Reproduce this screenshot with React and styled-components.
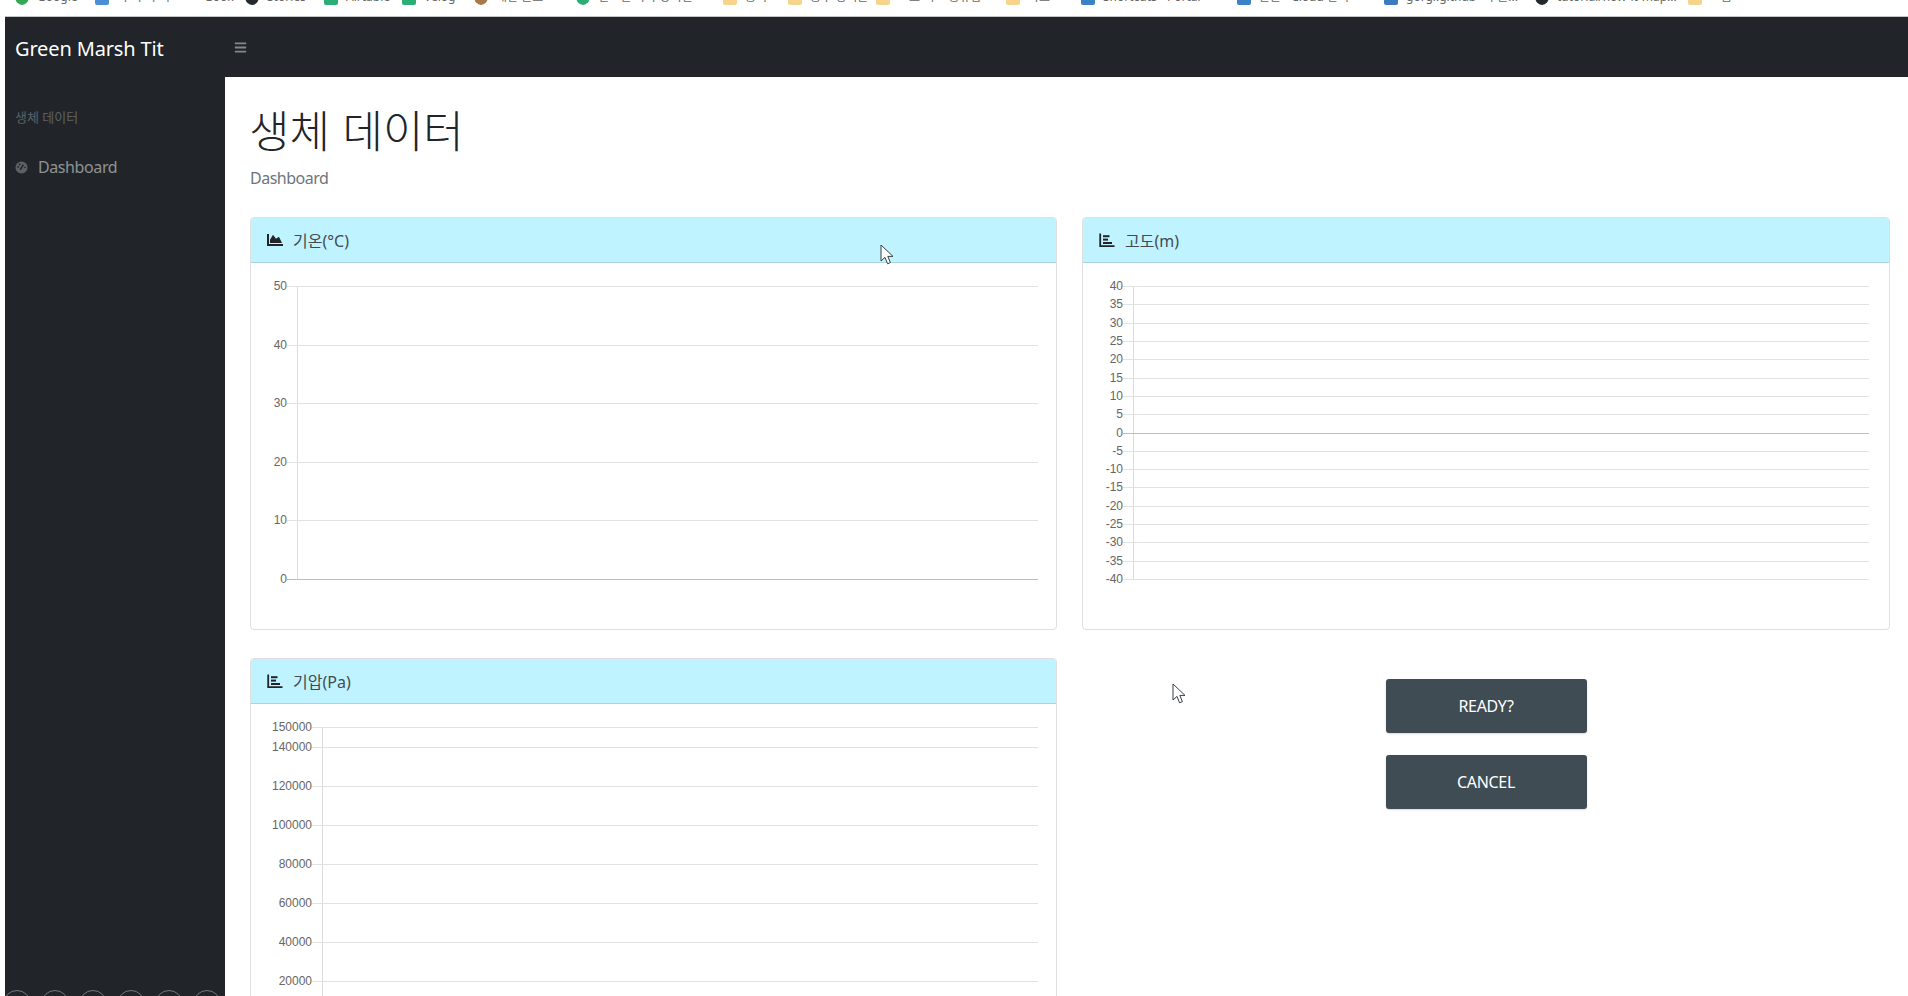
import React from "react";
import styled, { createGlobalStyle } from "styled-components";
import { FaBars, FaChartArea } from "react-icons/fa";

const bookmarks = [
  { width: 80, color: "#34a853", round: true, label: "Google" },
  { width: 87, color: "#4a8fd6", label: "가 나 다 라" },
  { width: 63, color: "transparent", label: "Gook" },
  { width: 79, color: "#24292e", round: true, label: "Stories" },
  { width: 78, color: "#2bae76", label: "Airtable" },
  { width: 72, color: "#2bae76", label: "Velog" },
  { width: 102, color: "#a9794b", round: true, label: "개발 블로그" },
  { width: 147, color: "#2bae76", round: true, label: "인프런 자바 강의실" },
  { width: 65, color: "#f7d48c", label: "공지" },
  { width: 88, color: "#f7d48c", label: "공부 정리글" },
  { width: 130, color: "#f7d48c", label: "프로 젝트 공유함" },
  { width: 75, color: "#f7d48c", label: "자료" },
  { width: 156, color: "#3b82c4", label: "Shortcuts - Portal" },
  { width: 147, color: "#3b82c4", label: "논문 - Cloud 관리" },
  { width: 151, color: "#3b7bbf", label: "gorgi.github - 구글..." },
  { width: 153, color: "#24292e", round: true, label: "tutorial/how-it-map..." },
  { width: 60, color: "#f7d48c", label: "모음" },
];

const linear = (from, to, count) =>
  Array.from({ length: count + 1 }, (_, i) => from + ((to - from) * i) / count);

const tempTicks = linear(23, 316, 5).map((y, i) => ({
  y,
  label: String(50 - i * 10),
  strong: i === 5,
}));

const altTicks = linear(23, 316, 16).map((y, i) => ({
  y,
  label: String(40 - i * 5),
  strong: 40 - i * 5 === 0,
}));

const pressureTicks = [
  { y: 23, label: "150000" },
  ...linear(42.7, 315.7, 7).map((y, i) => ({
    y,
    label: String(140000 - i * 20000),
    strong: i === 7,
  })),
];

const Chart = ({ ticks, axisX, rightX }) => (
  <ChartSvg viewBox="0 0 806 366">
    <line x1={axisX + 0.5} x2={axisX + 0.5} y1={23} y2={316} stroke="#dcdcdc" />
    {ticks.map((t) => (
      <g key={t.label}>
        <line
          x1={axisX - 10}
          x2={rightX}
          y1={Math.round(t.y) + 0.5}
          y2={Math.round(t.y) + 0.5}
          stroke={t.strong ? "#bdbdbd" : "#e2e2e2"}
        />
        <TickLabel x={axisX - 10} y={t.y + 4} textAnchor="end">
          {t.label}
        </TickLabel>
      </g>
    ))}
  </ChartSvg>
);

const BarIcon = () => (
  <svg viewBox="0 0 16 16">
    <path d="M1.2 1.5v12.7H15.5" fill="none" stroke="currentColor" strokeWidth="1.8" />
    <rect x="4" y="3.2" width="6.5" height="2" fill="currentColor" />
    <rect x="4" y="6.6" width="5" height="2" fill="currentColor" />
    <rect x="4" y="10" width="9" height="2" fill="currentColor" />
  </svg>
);

const GaugeIcon = () => (
  <svg viewBox="0 0 14 14">
    <circle cx="7" cy="7" r="6.5" fill="currentColor" />
    <path d="M5.6 9.6 9 3.8" stroke="#212529" strokeWidth="1.5" />
    <circle cx="3.4" cy="6.4" r="0.9" fill="#212529" />
    <circle cx="5" cy="3.6" r="0.9" fill="#212529" />
    <circle cx="10.8" cy="7" r="0.9" fill="#212529" />
  </svg>
);

const Cursor = ({ className }) => (
  <svg className={className} width="14" height="21" viewBox="0 0 14 21">
    <path
      d="M1 1v16l4-3.6 2.6 6.4 2.8-1.2-2.6-6.2H13z"
      fill="#fff"
      stroke="#3a3f44"
      strokeWidth="1"
    />
  </svg>
);

const App = () => (
  <Page>
    <GlobalStyle />
    <Bookmarks>
      {bookmarks.map((b) => (
        <Bookmark key={b.label} $width={b.width}>
          <Favicon $color={b.color} $round={b.round} />
          {b.label}
        </Bookmark>
      ))}
    </Bookmarks>
    <Frame>
      <Navbar>
        <Brand>Green Marsh Tit</Brand>
        <Toggle>
          <FaBars />
        </Toggle>
      </Navbar>
      <Body>
        <Sidebar>
          <SideHeading>생체 데이터</SideHeading>
          <SideLink>
            <GaugeIcon />
            Dashboard
          </SideLink>
          <SideFooter>
            {[0, 1, 2, 3, 4, 5].map((i) => (
              <FooterDot key={i} />
            ))}
          </SideFooter>
        </Sidebar>
        <Main>
          <Title>생체 데이터</Title>
          <Subtitle>Dashboard</Subtitle>
          <Cards>
            <Card>
              <CardHeader>
                <FaChartArea />
                기온(°C)
              </CardHeader>
              <Chart ticks={tempTicks} axisX={46} rightX={787} />
            </Card>
            <Card>
              <CardHeader>
                <BarIcon />
                고도(m)
              </CardHeader>
              <Chart ticks={altTicks} axisX={50} rightX={786} />
            </Card>
            <Card>
              <CardHeader>
                <BarIcon />
                기압(Pa)
              </CardHeader>
              <Chart ticks={pressureTicks} axisX={71} rightX={787} />
            </Card>
            <Actions>
              <ActionButton>READY?</ActionButton>
              <ActionButton>CANCEL</ActionButton>
            </Actions>
          </Cards>
        </Main>
      </Body>
    </Frame>
    <HeaderCursor />
    <PageCursor />
  </Page>
);

export default App;

const GlobalStyle = createGlobalStyle`
  html, body {
    margin: 0;
    height: 100%;
    overflow: hidden;
    background: #fff;
  }
`;

const FONT = `"Noto Sans", "Noto Sans CJK KR", sans-serif`;

const Page = styled.div`
  position: relative;
  height: 996px;
  overflow: hidden;
  display: flex;
  flex-direction: column;
  font-family: ${FONT};
`;

const Bookmarks = styled.div`
  height: 16px;
  flex: none;
  padding-left: 15px;
  display: flex;
  overflow: hidden;
  background: #fff;
`;

const Bookmark = styled.div`
  width: ${(p) => p.$width}px;
  flex: none;
  height: 17px;
  margin-top: -12px;
  display: flex;
  align-items: center;
  gap: 8px;
  font-size: 12px;
  line-height: 16px;
  color: #666;
  white-space: nowrap;
  overflow: hidden;
`;

const Favicon = styled.span`
  width: 14px;
  height: 17px;
  flex: none;
  background: ${(p) => p.$color};
  border-radius: ${(p) => (p.$round ? "50%" : "2px")};
`;

const Frame = styled.div`
  flex: 1;
  min-height: 0;
  margin-left: 5px;
  border-top: 1px solid #c6c6c6;
  display: flex;
  flex-direction: column;
`;

const Navbar = styled.header`
  height: 60px;
  flex: none;
  display: flex;
  align-items: center;
  background: #212529;
`;

const Brand = styled.div`
  width: 220px;
  flex: none;
  padding: 2px 0 0 10px;
  box-sizing: border-box;
  font-size: 20px;
  letter-spacing: -0.15px;
  color: #fff;
`;

const Toggle = styled.div`
  margin-left: 9px;
  display: flex;
  font-size: 13px;
  color: #85888b;
`;

const Body = styled.div`
  flex: 1;
  min-height: 0;
  display: flex;
`;

const Sidebar = styled.nav`
  width: 220px;
  flex: none;
  padding: 32px 0 0 10px;
  box-sizing: border-box;
  display: flex;
  flex-direction: column;
  overflow: hidden;
  background: #212529;
`;

const SideHeading = styled.div`
  font-size: 13px;
  line-height: 17px;
  color: #5c6166;
`;

const SideLink = styled.div`
  margin-top: 30px;
  display: flex;
  align-items: center;
  gap: 10px;
  font-size: 16px;
  line-height: 22px;
  letter-spacing: -0.4px;
  color: rgba(255, 255, 255, 0.5);

  svg {
    width: 13px;
    height: 13px;
    color: #5c6166;
  }
`;

const SideFooter = styled.div`
  margin-top: auto;
  margin-left: -12px;
  height: 6px;
  display: flex;
  gap: 10px;
`;

const FooterDot = styled.span`
  width: 28px;
  height: 28px;
  flex: none;
  box-sizing: border-box;
  border: 1px solid #74787c;
  border-radius: 50%;
`;

const Main = styled.main`
  flex: 1;
  min-width: 0;
  padding: 0 18px 0 25px;
  background: #fff;
`;

const Title = styled.h1`
  margin: 26px 0 0 -1px;
  font-size: 44px;
  font-weight: 300;
  line-height: 56px;
  word-spacing: 1px;
  color: #212529;
`;

const Subtitle = styled.div`
  margin-top: 8px;
  font-size: 16px;
  line-height: 22px;
  letter-spacing: -0.5px;
  color: #6c757d;
`;

const Cards = styled.div`
  margin-top: 28px;
  display: grid;
  grid-template-columns: 807px 808px;
  column-gap: 25px;
  row-gap: 28px;
`;

const Card = styled.section`
  height: 413px;
  box-sizing: border-box;
  border: 1px solid #dfdfdf;
  border-radius: 4px;
  overflow: hidden;
  display: flex;
  flex-direction: column;
  background: #fff;
`;

const CardHeader = styled.div`
  height: 45px;
  flex: none;
  box-sizing: border-box;
  padding-left: 16px;
  display: flex;
  align-items: center;
  gap: 10px;
  font-size: 16px;
  color: #444b50;
  background: #bff3ff;
  border-bottom: 1px solid #a9d5de;

  svg {
    width: 16px;
    height: 16px;
    color: #212529;
  }
`;

const ChartSvg = styled.svg`
  display: block;
  width: 806px;
  height: 366px;
`;

const TickLabel = styled.text`
  font-family: "Liberation Sans", sans-serif;
  font-size: 12px;
  fill: #666;
`;

const Actions = styled.div`
  padding-top: 21px;
  display: flex;
  flex-direction: column;
  align-items: center;
  gap: 22px;
`;

const ActionButton = styled.button`
  width: 201px;
  height: 54px;
  border: none;
  border-radius: 3px;
  font-family: ${FONT};
  font-size: 16px;
  letter-spacing: -0.3px;
  color: #fff;
  background: #3f4c53;
  box-shadow: 0 1px 2px rgba(0, 0, 0, 0.15);
`;

const HeaderCursor = styled(Cursor)`
  position: absolute;
  left: 880px;
  top: 244px;
`;

const PageCursor = styled(Cursor)`
  position: absolute;
  left: 1172px;
  top: 683px;
`;
